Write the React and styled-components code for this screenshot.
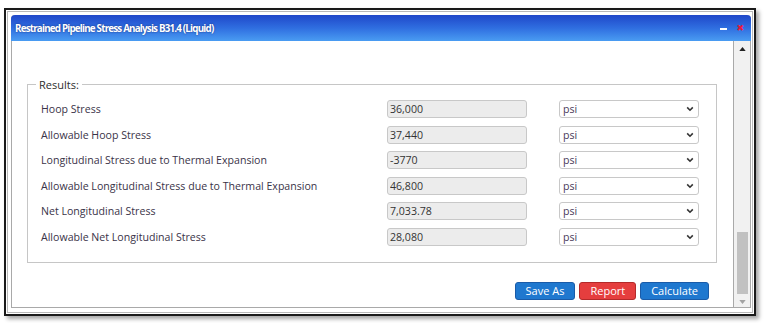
import React from "react"
import styled, { createGlobalStyle } from "styled-components"

const GlobalStyle = createGlobalStyle`
	html, body {
		margin: 0;
		padding: 0;
		background: #fff;
		font-family: "Open Sans", "Liberation Sans", sans-serif;
	}
`

const rows = [
	{ label: "Hoop Stress", value: "36,000" },
	{ label: "Allowable Hoop Stress", value: "37,440" },
	{ label: "Longitudinal Stress due to Thermal Expansion", value: "-3770" },
	{ label: "Allowable Longitudinal Stress due to Thermal Expansion", value: "46,800" },
	{ label: "Net Longitudinal Stress", value: "7,033.78" },
	{ label: "Allowable Net Longitudinal Stress", value: "28,080" },
]

const App = () => {
	return (
		<>
			<GlobalStyle />
			<Page>
				<Frame>
					<Inner>
						<Window>
							<TitleBar>
								<Title>Restrained Pipeline Stress Analysis B31.4 (Liquid)</Title>
								<Controls>
									<Minimize />
									<Close>✖</Close>
								</Controls>
							</TitleBar>
							<Body>
								<Content>
									<Results>
										<Legend>Results:</Legend>
										<Grid>
											{rows.map((row) => (
												<React.Fragment key={row.label}>
													<Label>{row.label}</Label>
													<Input readOnly value={row.value} />
													<SelectWrap>
														<Select defaultValue="psi">
															<option value="psi">psi</option>
															<option value="ksi">ksi</option>
															<option value="MPa">MPa</option>
														</Select>
														<Chevron viewBox="0 0 10 10">
															<path d="M1.5 3 L5 6.5 L8.5 3" />
														</Chevron>
													</SelectWrap>
												</React.Fragment>
											))}
										</Grid>
									</Results>
									<Footer>
										<Button>Save As</Button>
										<Button danger>Report</Button>
										<Button>Calculate</Button>
									</Footer>
								</Content>
								<Scrollbar>
									<Arrow viewBox="0 0 8 5">
										<path d="M0 5 L4 0 L8 5 Z" />
									</Arrow>
									<Track>
										<Thumb />
									</Track>
									<Arrow viewBox="0 0 8 5" light>
										<path d="M0 0 L4 5 L8 0 Z" />
									</Arrow>
								</Scrollbar>
							</Body>
						</Window>
					</Inner>
				</Frame>
			</Page>
		</>
	)
}

const Page = styled.div`
	width: 768px;
	height: 323px;
	padding: 8px 0 0 4px;
	box-sizing: border-box;
`

const Frame = styled.div`
	width: 752px;
	height: 308px;
	box-sizing: border-box;
	border: 2px solid #1a1a1a;
	box-shadow: 3px 3px 4px rgba(0, 0, 0, 0.35);
	padding: 1px;
	background: #fff;
`

const Inner = styled.div`
	height: 100%;
	box-sizing: border-box;
	border: 1px solid #b8b8b8;
	padding: 3px 1px 4px 3px;
	display: flex;
`

const Window = styled.div`
	flex: 1;
	min-width: 0;
	display: flex;
	flex-direction: column;
	border: 1px solid #a9a9a9;
	border-top: none;
	border-radius: 4px 4px 0 0;
	background: #fff;
`

const TitleBar = styled.div`
	height: 26px;
	margin: 0 -1px;
	display: flex;
	align-items: center;
	justify-content: space-between;
	padding: 0 7px 0 4px;
	border-radius: 4px 4px 0 0;
	background: linear-gradient(to bottom, #1f47c9 0%, #2f6ee0 50%, #4a9cf2 100%);
`

const Title = styled.span`
	color: #fff;
	font-weight: 700;
	font-size: 9.8px;
	letter-spacing: -0.8px;
	text-shadow: 0 0 2px rgba(0, 0, 60, 0.6);
	white-space: nowrap;
`

const Controls = styled.div`
	display: flex;
	align-items: center;
	gap: 9px;
`

const Minimize = styled.span`
	width: 7px;
	height: 2px;
	background: #fff;
	margin-top: 1px;
`

const Close = styled.span`
	color: #e8183c;
	font-size: 9px;
	line-height: 1;
	font-family: "DejaVu Sans", sans-serif;
`

const Body = styled.div`
	flex: 1;
	display: flex;
	min-height: 0;
`

const Content = styled.div`
	flex: 1;
	min-width: 0;
	display: flex;
	flex-direction: column;
	padding: 36px 16px 0 15px;
`

const Results = styled.fieldset`
	margin: 0;
	padding: 8px 10px 16px 8px;
	border: 1px solid #c6c6c6;
	min-width: 0;
`

const Legend = styled.legend`
	padding: 0 3px;
	font-size: 11px;
	color: #2e2e2e;
`

const Grid = styled.div`
	display: grid;
	grid-template-columns: 314px 140px 140px;
	column-gap: 32px;
	row-gap: 7.6px;
	align-items: center;
	padding-left: 5px;
`

const Label = styled.span`
	font-size: 10.6px;
	color: #3a3348;
`

const Input = styled.input`
	display: block;
	height: 18px;
	width: 100%;
	box-sizing: border-box;
	border: 1px solid #c8c8c8;
	border-radius: 3px;
	background: #ececec;
	padding: 0 2px;
	font-family: "Open Sans", sans-serif;
	font-size: 10.6px;
	color: #333;
	outline: none;
`

const SelectWrap = styled.div`
	position: relative;
	height: 18px;
`

const Select = styled.select`
	display: block;
	appearance: none;
	width: 100%;
	height: 18px;
	box-sizing: border-box;
	border: 1px solid #c8c8c8;
	border-radius: 3px;
	background: #fff;
	padding: 0 3px;
	font-family: "Open Sans", sans-serif;
	font-size: 10.6px;
	line-height: 16px;
	color: #4a3a5a;
	outline: none;
`

const Chevron = styled.svg`
	position: absolute;
	right: 5px;
	top: 5px;
	width: 8px;
	height: 8px;
	fill: none;
	stroke: #333;
	stroke-width: 2;
	pointer-events: none;
`

const Footer = styled.div`
	display: flex;
	justify-content: flex-end;
	gap: 4px;
	margin-top: 19px;
	padding-right: 8px;
`

const Button = styled.button`
	height: 18px;
	box-sizing: border-box;
	padding: 0 10px;
	border-radius: 3px;
	border: 1px solid ${({ danger }) => (danger ? "#b32a2a" : "#1a5ba8")};
	background: ${({ danger }) => (danger ? "#e53e3e" : "#1f78cf")};
	color: #fff;
	font-family: "Open Sans", sans-serif;
	font-size: 11px;
	line-height: 1;
	cursor: pointer;
`

const Scrollbar = styled.div`
	width: 16px;
	flex-shrink: 0;
	display: flex;
	flex-direction: column;
	align-items: center;
	border-left: 1px solid #a9a9a9;
	background: #f1f1f1;
	padding: 6px 0 3px;
`

const Arrow = styled.svg`
	width: 7px;
	height: 4px;
	fill: ${({ light }) => (light ? "#a3a3a3" : "#222")};
	flex-shrink: 0;
`

const Track = styled.div`
	flex: 1;
	width: 100%;
	display: flex;
	flex-direction: column;
	justify-content: flex-end;
	align-items: center;
	padding: 0 0 6px;
`

const Thumb = styled.div`
	width: 11px;
	height: 62px;
	background: #c1c1c1;
`

export default App
